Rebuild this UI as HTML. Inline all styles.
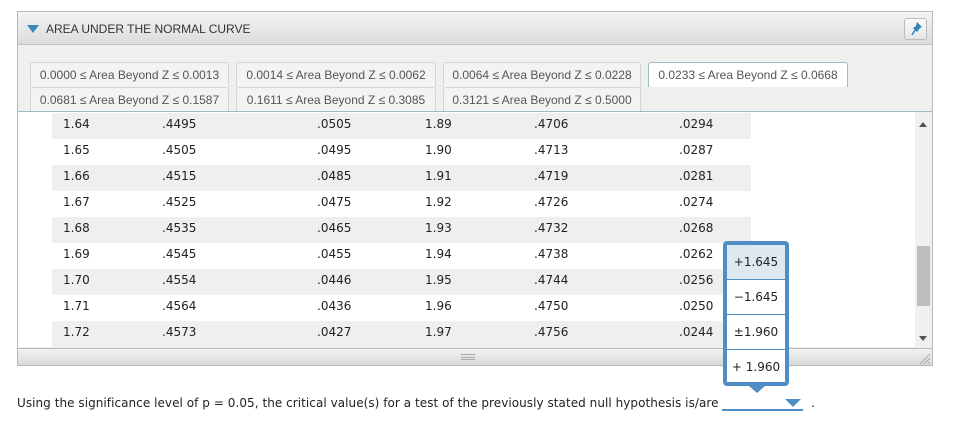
<!DOCTYPE html>
<html><head><style>
*{box-sizing:border-box;margin:0;padding:0}
body{width:977px;height:440px;background:#fff;position:relative;font-family:"DejaVu Sans",Verdana,sans-serif;overflow:hidden}
.abs{position:absolute}
#panel{left:17px;top:11px;width:916px;height:355px;border:1px solid #b9b9b9;background:#efefef}
#hdr{left:0;top:0;width:914px;height:33px;background:linear-gradient(#f4f4f4,#dcdcdc);border-bottom:1px solid #c4c4c4;font:12px "Liberation Sans",Arial,sans-serif;color:#333}
.tab{position:absolute;height:25px;background:#f3f3f3;border:1px solid #d4d4d4;border-bottom:none;border-radius:3px 3px 0 0;font:12px "Liberation Sans",Arial,sans-serif;color:#555;text-align:center;line-height:24px}
#tbl{left:0;top:99px;width:914px;height:236px;background:#fff;border-top:1px solid #9cbcc4;overflow:hidden}
.row{position:absolute;left:34px;width:699px;height:26px;font-size:12px;color:#222}
.row.g{background:#efefef}
.row span{position:absolute;top:4px}
#bot{left:0;top:336px;width:914px;height:17px;background:linear-gradient(#f2f2f2,#dadada);border-top:1px solid #b9b9b9}
.opt{height:35px;border-bottom:1px solid #4f8ec4;font-size:12px;color:#222;text-align:center;line-height:34px}
</style></head><body>
<div id="panel" class="abs">
 <div id="hdr" class="abs">
  <svg class="abs" style="left:9px;top:13px" width="12" height="8"><path d="M0 0H12L6 8Z" fill="#3a8ab8"/></svg>
  <div class="abs" style="left:28px;top:10px">AREA UNDER THE NORMAL CURVE</div>
  <div class="abs" style="left:886px;top:6px;width:23px;height:22px;border:1px solid #bbb;border-radius:3px;background:linear-gradient(#fafafa,#e6e6e6)">
   <svg width="21" height="20"><path d="M7 16L10 11" stroke="#2f86b4" stroke-width="1.5"/><path d="M12 3L17 8L15 9L12 13L8 9L11 7Z" fill="#2f86b4"/></svg>
  </div>
 </div>
 <div class="tab" style="left:12px;top:50px;width:199px">0.0000 ≤ Area Beyond Z ≤ 0.0013</div>
 <div class="tab" style="left:218px;top:50px;width:200px">0.0014 ≤ Area Beyond Z ≤ 0.0062</div>
 <div class="tab" style="left:425px;top:50px;width:198px">0.0064 ≤ Area Beyond Z ≤ 0.0228</div>
 <div class="tab" style="left:630px;top:50px;width:200px;background:#fff;border-color:#9cbcc4">0.0233 ≤ Area Beyond Z ≤ 0.0668</div>
 <div class="tab" style="left:12px;top:75px;width:199px;height:24px">0.0681 ≤ Area Beyond Z ≤ 0.1587</div>
 <div class="tab" style="left:218px;top:75px;width:200px;height:24px">0.1611 ≤ Area Beyond Z ≤ 0.3085</div>
 <div class="tab" style="left:425px;top:75px;width:198px;height:24px">0.3121 ≤ Area Beyond Z ≤ 0.5000</div>
 <div id="tbl" class="abs">
  <div class="row g" style="top:1px"><span style="left:11px">1.64</span><span style="left:110px">.4495</span><span style="left:265px">.0505</span><span style="left:373px">1.89</span><span style="left:482px">.4706</span><span style="left:627px">.0294</span></div>
  <div class="row" style="top:27px"><span style="left:11px">1.65</span><span style="left:110px">.4505</span><span style="left:265px">.0495</span><span style="left:373px">1.90</span><span style="left:482px">.4713</span><span style="left:627px">.0287</span></div>
  <div class="row g" style="top:53px"><span style="left:11px">1.66</span><span style="left:110px">.4515</span><span style="left:265px">.0485</span><span style="left:373px">1.91</span><span style="left:482px">.4719</span><span style="left:627px">.0281</span></div>
  <div class="row" style="top:79px"><span style="left:11px">1.67</span><span style="left:110px">.4525</span><span style="left:265px">.0475</span><span style="left:373px">1.92</span><span style="left:482px">.4726</span><span style="left:627px">.0274</span></div>
  <div class="row g" style="top:105px"><span style="left:11px">1.68</span><span style="left:110px">.4535</span><span style="left:265px">.0465</span><span style="left:373px">1.93</span><span style="left:482px">.4732</span><span style="left:627px">.0268</span></div>
  <div class="row" style="top:131px"><span style="left:11px">1.69</span><span style="left:110px">.4545</span><span style="left:265px">.0455</span><span style="left:373px">1.94</span><span style="left:482px">.4738</span><span style="left:627px">.0262</span></div>
  <div class="row g" style="top:157px"><span style="left:11px">1.70</span><span style="left:110px">.4554</span><span style="left:265px">.0446</span><span style="left:373px">1.95</span><span style="left:482px">.4744</span><span style="left:627px">.0256</span></div>
  <div class="row" style="top:183px"><span style="left:11px">1.71</span><span style="left:110px">.4564</span><span style="left:265px">.0436</span><span style="left:373px">1.96</span><span style="left:482px">.4750</span><span style="left:627px">.0250</span></div>
  <div class="row g" style="top:209px"><span style="left:11px">1.72</span><span style="left:110px">.4573</span><span style="left:265px">.0427</span><span style="left:373px">1.97</span><span style="left:482px">.4756</span><span style="left:627px">.0244</span></div>
  <div class="abs" style="left:897px;top:0;width:17px;height:236px;background:#f0f0f0">
   <svg class="abs" style="left:4px;top:10px" width="8" height="5"><path d="M0 5H8L4 0Z" fill="#555"/></svg>
   <div class="abs" style="left:2px;top:134px;width:13px;height:60px;background:#bdbdbd"></div>
   <svg class="abs" style="left:4px;top:224px" width="8" height="5"><path d="M0 0H8L4 5Z" fill="#555"/></svg>
  </div>
 </div>
 <div id="bot" class="abs">
  <div class="abs" style="left:443px;top:5px;width:14px;height:6px;border-top:1px solid #aaa;border-bottom:1px solid #aaa"></div>
  <div class="abs" style="left:443px;top:8px;width:14px;height:1px;background:#aaa"></div>
  <svg class="abs" style="left:900px;top:3px" width="12" height="12"><path d="M2 12L12 2M6 12L12 6M10 12L12 10" stroke="#aaa"/></svg>
 </div>
</div>
<div class="abs" style="left:723px;top:241px;width:66px;height:145px;border:4px solid #4f8ec4;border-radius:4px;background:#fff">
 <div class="opt" style="background:#dde8f0">+1.645</div>
 <div class="opt">−1.645</div>
 <div class="opt">±1.960</div>
 <div class="opt" style="border:none">+ 1.960</div>
</div>
<svg class="abs" style="left:749px;top:386px" width="16" height="7"><path d="M0 0H16L8 7Z" fill="#4f8ec4"/></svg>
<div class="abs" style="left:17px;top:396px;font-size:12px;color:#222;white-space:nowrap;letter-spacing:0.05px">Using the significance level of p = 0.05, the critical value(s) for a test of the previously stated null hypothesis is/are</div>
<div class="abs" style="left:722px;top:409px;width:81px;height:2px;background:#4f8ec4"></div>
<svg class="abs" style="left:785px;top:399px" width="16" height="8"><path d="M0 0H16L8 8Z" fill="#4f8ec4"/></svg>
<div class="abs" style="left:811px;top:396px;font-size:12px;color:#222">.</div>
</body></html>
